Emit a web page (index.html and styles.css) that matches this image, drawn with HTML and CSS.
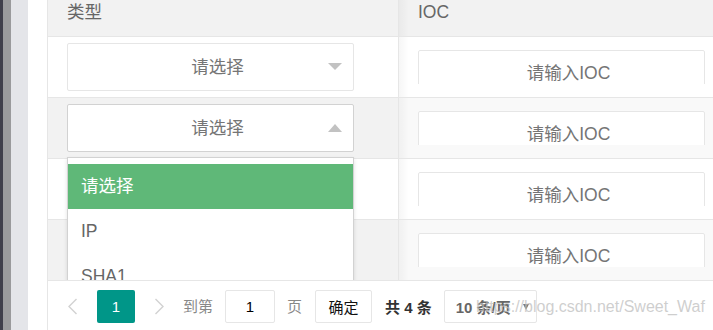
FILE: index.html
```html
<!DOCTYPE html>
<html lang="zh-CN">
<head>
    <meta charset="UTF-8">
    <meta name="viewport" content="width=device-width, initial-scale=1.0">
    <title>IOC 列表</title>
    <link rel="stylesheet" href="styles.css">
</head>
<body>
    <div class="screen">
        <div class="edge-dark"></div>
        <div class="edge-bar"></div>
        <div class="edge-light"></div>
        <div class="gutter"></div>

        <div class="table-box">
            <!-- Cabecera -->
            <div class="table-head">
                <div class="th col-type">类型</div>
                <div class="th col-ioc">IOC</div>
            </div>

            <!-- Filas -->
            <div class="table-body">
                <div class="row">
                    <div class="td col-type">
                        <div class="select">
                            <input class="select-input" type="text" placeholder="请选择" readonly>
                            <i class="select-arrow"></i>
                        </div>
                    </div>
                    <div class="td col-ioc">
                        <div class="ioc-clip"><input class="ioc-input" type="text" placeholder="请输入IOC"></div>
                    </div>
                </div>

                <div class="row row-even">
                    <div class="td col-type">
                        <div class="select select-open">
                            <input class="select-input" type="text" placeholder="请选择" readonly>
                            <i class="select-arrow"></i>
                            <dl class="options">
                                <dd class="option option-this">请选择</dd>
                                <dd class="option">IP</dd>
                                <dd class="option">SHA1</dd>
                                <dd class="option">MD5</dd>
                            </dl>
                        </div>
                    </div>
                    <div class="td col-ioc">
                        <div class="ioc-clip"><input class="ioc-input" type="text" placeholder="请输入IOC"></div>
                    </div>
                </div>

                <div class="row">
                    <div class="td col-type">
                        <div class="select">
                            <input class="select-input" type="text" placeholder="请选择" readonly>
                            <i class="select-arrow"></i>
                        </div>
                    </div>
                    <div class="td col-ioc">
                        <div class="ioc-clip"><input class="ioc-input" type="text" placeholder="请输入IOC"></div>
                    </div>
                </div>

                <div class="row row-even">
                    <div class="td col-type">
                        <div class="select">
                            <input class="select-input" type="text" placeholder="请选择" readonly>
                            <i class="select-arrow"></i>
                        </div>
                    </div>
                    <div class="td col-ioc">
                        <div class="ioc-clip"><input class="ioc-input" type="text" placeholder="请输入IOC"></div>
                    </div>
                </div>
            </div>

            <!-- Paginación -->
            <div class="table-page">
                <span class="page-arrow">
                    <svg width="11" height="17" viewBox="0 0 11 17"><polyline points="9.5,1 2,8.5 9.5,16" fill="none" stroke="#d2d2d2" stroke-width="1.4"/></svg>
                </span>
                <span class="page-cur">1</span>
                <span class="page-arrow page-next">
                    <svg width="11" height="17" viewBox="0 0 11 17"><polyline points="1.5,1 9,8.5 1.5,16" fill="none" stroke="#d2d2d2" stroke-width="1.4"/></svg>
                </span>
                <span class="page-text page-skip">到第</span>
                <input class="page-input" type="text" value="1">
                <span class="page-text page-unit">页</span>
                <button class="page-btn" type="button">确定</button>
                <span class="page-count">共 4 条</span>
                <span class="page-limit">10 条/页 <i class="limit-arrow"></i></span>

                <div class="watermark">https://blog.csdn.net/Sweet_Waf</div>
            </div>
        </div>
    </div>
</body>
</html>
```

FILE: styles.css
```css
/* Global */
* {
    margin: 0;
    padding: 0;
    box-sizing: border-box;
}

body {
    font-family: "Liberation Sans", "Noto Sans CJK SC", sans-serif;
    background-color: #fff;
    overflow: hidden;
}

.screen {
    display: flex;
    width: 713px;
    height: 330px;
}

/* Borde izquierdo de la ventana */
.edge-dark {
    width: 3px;
    background-color: #3f3e4a;
}

.edge-bar {
    width: 8px;
    background-color: #9a9a9c;
}

.edge-light {
    width: 17px;
    background-color: #e4e5e9;
}

.gutter {
    width: 19px;
    background-color: #fff;
}

/* Tabla */
.table-box {
    flex: 1;
    min-width: 0;
    display: flex;
    flex-direction: column;
    border-left: 1px solid #e6e6e6;
}

.table-head {
    display: flex;
    height: 37px;
    background-color: #f2f2f2;
    border-bottom: 1px solid #e6e6e6;
}

.th {
    padding-left: 19px;
    font-size: 17.5px;
    line-height: 24px;
    color: #666;
}

.col-type {
    width: 351px;
    flex: none;
    border-right: 1px solid #e6e6e6;
}

.col-ioc {
    flex: 1;
    background-image: linear-gradient(to right, rgba(0, 0, 0, 0.035), rgba(0, 0, 0, 0) 10px);
}

.table-body {
    height: 243px;
    overflow: hidden;
}

.row {
    display: flex;
    height: 61px;
    border-bottom: 1px solid #e6e6e6;
}

.row-even .col-type {
    background-color: #f2f2f2;
}

.row-even .col-ioc {
    background-color: #f9f9f9;
}

.td.col-type {
    padding: 6px 0 0 19px;
}

.td.col-ioc {
    padding: 13px 0 0 19px;
}

/* Select */
.select {
    position: relative;
    width: 287px;
    height: 48px;
}

.select-input,
.ioc-input {
    width: 287px;
    border: 1px solid #e6e6e6;
    border-radius: 2px;
    background-color: #fff;
    padding: 0 16px 0 30px;
    font-family: inherit;
    font-size: 17.5px;
    text-align: center;
    color: #555;
    outline: none;
}

.select-input {
    height: 48px;
}

.select-input::placeholder,
.ioc-input::placeholder {
    color: #757575;
}

.select-open .select-input {
    border-color: #d2d2d2;
}

.select-arrow {
    position: absolute;
    right: 12px;
    top: 20px;
    width: 0;
    height: 0;
    border-left: 7px solid transparent;
    border-right: 7px solid transparent;
    border-top: 7px solid #c2c2c2;
}

.select-open .select-arrow {
    border-top: none;
    border-bottom: 8px solid #c2c2c2;
}

.options {
    position: absolute;
    top: 53px;
    left: 0;
    z-index: 2;
    width: 287px;
    padding: 6px 0;
    border: 1px solid #d2d2d2;
    background-color: #fff;
    box-shadow: 0 2px 4px rgba(0, 0, 0, 0.12);
}

.option {
    height: 45px;
    line-height: 45px;
    padding-left: 13px;
    font-size: 17.5px;
    color: #666;
}

.option-this {
    background-color: #5fb878;
    color: #fff;
}

/* Input IOC (cortado por la celda) */
.ioc-clip {
    height: 34px;
    overflow: hidden;
}

.ioc-input {
    height: 47px;
}

/* Paginación */
.table-page {
    position: relative;
    display: flex;
    align-items: center;
    height: 50px;
    padding: 9px 0 7px 19px;
    border-top: 1px solid #e6e6e6;
    font-size: 15px;
}

.page-arrow {
    display: flex;
    align-items: center;
    width: 11px;
    height: 33px;
}

.page-cur {
    width: 38px;
    height: 33px;
    margin-left: 19px;
    line-height: 33px;
    text-align: center;
    border-radius: 2px;
    background-color: #009688;
    color: #fff;
}

.page-next {
    margin-left: 19px;
}

.page-text {
    color: #888;
    line-height: 33px;
}

.page-skip {
    margin-left: 18px;
}

.page-input {
    width: 50px;
    height: 33px;
    margin-left: 12px;
    border: 1px solid #e6e6e6;
    border-radius: 2px;
    font-family: inherit;
    font-size: 15px;
    text-align: center;
    color: #000;
    outline: none;
}

.page-unit {
    margin-left: 12px;
}

.page-btn {
    width: 57px;
    height: 33px;
    margin-left: 13px;
    border: 1px solid #e6e6e6;
    border-radius: 2px;
    background-color: #fff;
    font-family: inherit;
    font-size: 15px;
    color: #111;
}

.page-count {
    margin-left: 13px;
    font-weight: bold;
    color: #333;
}

.page-limit {
    display: flex;
    align-items: center;
    width: 93px;
    height: 33px;
    margin-left: 12px;
    padding-left: 11px;
    border: 1px solid #e6e6e6;
    border-radius: 2px;
    font-weight: bold;
    color: #666;
    white-space: pre;
}

.limit-arrow {
    width: 0;
    height: 0;
    margin-left: 8px;
    border-left: 3.5px solid transparent;
    border-right: 3.5px solid transparent;
    border-top: 6px solid #777;
}

/* Marca de agua */
.watermark {
    position: absolute;
    left: 428px;
    top: 17px;
    font-size: 16px;
    line-height: 18px;
    color: rgba(190, 190, 190, 0.75);
    white-space: nowrap;
    pointer-events: none;
}
```
